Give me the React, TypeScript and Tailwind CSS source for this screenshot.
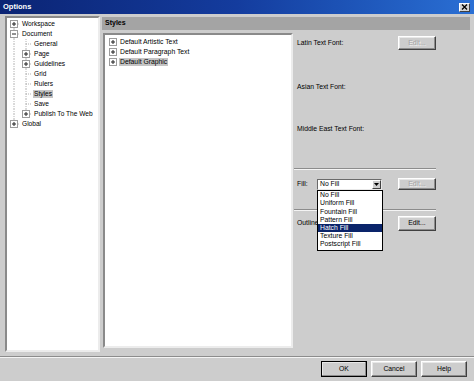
import React from "react";

// Options dialog: tree on the left, styles list + properties on the right

type Node = {
  label: string;
  depth: 0 | 1;
  box?: "plus" | "minus";
  first?: boolean;
  last?: boolean;
  selected?: boolean;
};

const tree: Node[] = [
  { label: "Workspace", depth: 0, box: "plus", first: true },
  { label: "Document", depth: 0, box: "minus" },
  { label: "General", depth: 1, first: true },
  { label: "Page", depth: 1, box: "plus" },
  { label: "Guidelines", depth: 1, box: "plus" },
  { label: "Grid", depth: 1 },
  { label: "Rulers", depth: 1 },
  { label: "Styles", depth: 1, selected: true },
  { label: "Save", depth: 1 },
  { label: "Publish To The Web", depth: 1, box: "plus", last: true },
  { label: "Global", depth: 0, box: "plus", last: true },
];

const fills = [
  "No Fill",
  "Uniform Fill",
  "Fountain Fill",
  "Pattern Fill",
  "Hatch Fill",
  "Texture Fill",
  "Postscript Fill",
];

// one connector cell: dotted lines + optional +/- box
const Cell = ({
  up = false,
  down = false,
  right = false,
  box,
}: {
  up?: boolean;
  down?: boolean;
  right?: boolean;
  box?: "plus" | "minus";
}) => (
  <svg width="12" height="10" viewBox="0 0 12 10" className="shrink-0">
    {up && <line x1="6" y1="0" x2="6" y2="5" stroke="#b4b4b4" strokeDasharray="1 1" />}
    {down && <line x1="6" y1="5" x2="6" y2="10" stroke="#b4b4b4" strokeDasharray="1 1" />}
    {right && <line x1="6" y1="5" x2="12" y2="5" stroke="#b4b4b4" strokeDasharray="1 1" />}
    {box && (
      <g>
        <rect x="2.5" y="1.5" width="7" height="7" fill="#fff" stroke="#9c9c9c" />
        <line x1="4" y1="5" x2="8" y2="5" stroke="#222" />
        {box === "plus" && <line x1="6" y1="3" x2="6" y2="7" stroke="#222" />}
      </g>
    )}
  </svg>
);

const Btn = ({
  children,
  disabled,
  primary,
  className = "",
}: {
  children: React.ReactNode;
  disabled?: boolean;
  primary?: boolean;
  className?: string;
}) => (
  <div
    className={`flex items-center justify-center bg-[#cdcdcd] border ${
      primary ? "border-black" : "border-t-white border-l-white border-b-[#404040] border-r-[#404040]"
    } shadow-[inset_-1px_-1px_0_#8c8c8c,inset_1px_1px_0_#e8e8e8] text-[6.8px] ${className}`}
  >
    <span className={disabled ? "text-[#a4a4a4] [text-shadow:1px_1px_0_#f2f2f2]" : "text-black"}>{children}</span>
  </div>
);

const Separator = () => (
  <div className="-ml-[3px] w-[142px] h-[2px] border-t border-t-[#8c8c8c] border-b border-b-[#f4f4f4]" />
);

export default function App() {
  return (
    <div className="w-[474px] h-[381px] bg-[#cdcdcd] flex flex-col overflow-hidden font-['Liberation_Sans',Arial,sans-serif] text-black">
      {/* Title bar */}
      <div className="h-[14px] shrink-0 flex items-center justify-between pl-[3px] pr-[4px] bg-linear-to-r from-[#0b2474] via-[#143c9e] to-[#2a6fd4]">
        <span className="text-white font-bold text-[7.5px] leading-none">Options</span>
        <div className="w-[11px] h-[9px] bg-[#d4d4d4] border border-t-white border-l-white border-b-[#404040] border-r-[#404040] flex items-center justify-center">
          <svg width="7" height="6" viewBox="0 0 7 6">
            <path d="M1 0.5 L6 5.5 M6 0.5 L1 5.5" stroke="#000" strokeWidth="1.3" />
          </svg>
        </div>
      </div>

      {/* Main */}
      <div className="h-[342px] shrink-0 flex pt-[2px]">
        {/* Tree */}
        <div className="ml-[5px] w-[95px] h-[336px] bg-white border-2 border-t-[#8a8a8a] border-l-[#8a8a8a] border-r-[#ececec] border-b-[#ececec] pt-[1px]">
          {tree.map((n) => (
            <div key={n.label} className="h-[10px] flex items-center pl-[1px] text-[6.6px] leading-none whitespace-nowrap">
              {n.depth === 0 ? (
                <Cell up={!n.first} down={!n.last} right box={n.box} />
              ) : (
                <>
                  <Cell up down />
                  <Cell up down={!n.last} right box={n.box} />
                </>
              )}
              <span className={`ml-[1px] px-[1px] py-[1px] ${n.selected ? "bg-[#c4c4c4]" : ""}`}>{n.label}</span>
            </div>
          ))}
        </div>

        {/* Right section */}
        <div className="ml-[2px] mt-[1px] w-[368px] flex flex-col">
          <div className="h-[13px] bg-[#a4a4a4] flex items-center pl-[3px] text-[7px] font-bold">Styles</div>

          <div className="flex mt-[3px]">
            {/* Styles list */}
            <div className="ml-[1px] w-[190px] h-[315px] bg-white border-2 border-t-[#8a8a8a] border-l-[#8a8a8a] border-r-[#ececec] border-b-[#ececec] pt-[2px] pl-[2px]">
              {["Default Artistic Text", "Default Paragraph Text", "Default Graphic"].map((s, i) => (
                <div key={s} className="h-[10px] flex items-center text-[6.8px] leading-none whitespace-nowrap">
                  <Cell box="plus" />
                  <span className={`px-[1px] py-[1px] ${i === 2 ? "bg-[#c4c4c4]" : ""}`}>{s}</span>
                </div>
              ))}
            </div>

            {/* Properties */}
            <div className="ml-[4px] w-[170px] flex flex-col text-[6.8px] leading-none">
              <div className="mt-[3px] h-[14px] w-[139px] flex items-center justify-between">
                <span>Latin Text Font:</span>
                <Btn disabled className="w-[38px] h-[14px]">Edit...</Btn>
              </div>
              <div className="mt-[34px] h-[8px]">Asian Text Font:</div>
              <div className="mt-[34px] h-[8px]">Middle East Text Font:</div>

              <div className="mt-[34px]">
                <Separator />
              </div>

              <div className="mt-[8px] h-[12px] w-[139px] flex items-center">
                <span className="w-[20px]">Fill:</span>
                <div className="relative w-[65px] h-[11px] bg-white border border-t-[#6a6a6a] border-l-[#6a6a6a] border-r-[#e8e8e8] border-b-[#e8e8e8] flex items-center">
                  <span className="pl-[2px] flex-1">No Fill</span>
                  <div className="w-[9px] h-[9px] bg-[#cdcdcd] border border-t-white border-l-white border-b-[#404040] border-r-[#404040] flex items-center justify-center">
                    <svg width="5" height="3" viewBox="0 0 5 3">
                      <path d="M0 0 H5 L2.5 3 Z" fill="#000" />
                    </svg>
                  </div>
                  {/* open dropdown */}
                  <div className="absolute left-[-1px] top-[10px] w-[66px] bg-white border border-black z-10 py-[1px]">
                    {fills.map((f) => (
                      <div
                        key={f}
                        className={`h-[8.2px] flex items-center pl-[2px] whitespace-nowrap ${
                          f === "Hatch Fill" ? "bg-[#0a246a] text-white" : ""
                        }`}
                      >
                        {f}
                      </div>
                    ))}
                  </div>
                </div>
                <div className="flex-1" />
                <Btn disabled className="w-[38px] h-[12px]">Edit...</Btn>
              </div>

              <div className="mt-[19px]">
                <Separator />
              </div>

              <div className="mt-[5px] h-[15px] w-[139px] flex items-center justify-between">
                <span>Outline:</span>
                <Btn className="w-[38px] h-[15px]">Edit...</Btn>
              </div>
            </div>
          </div>
        </div>
      </div>

      {/* Bottom separator + buttons */}
      <div className="h-[2px] shrink-0 border-t border-t-[#8c8c8c] border-b border-b-[#f4f4f4]" />
      <div className="flex justify-end gap-[4px] pr-[7px] pt-[3px]">
        <Btn primary className="w-[46px] h-[16px]">OK</Btn>
        <Btn className="w-[46px] h-[16px]">Cancel</Btn>
        <Btn className="w-[46px] h-[16px]">Help</Btn>
      </div>
    </div>
  );
}
